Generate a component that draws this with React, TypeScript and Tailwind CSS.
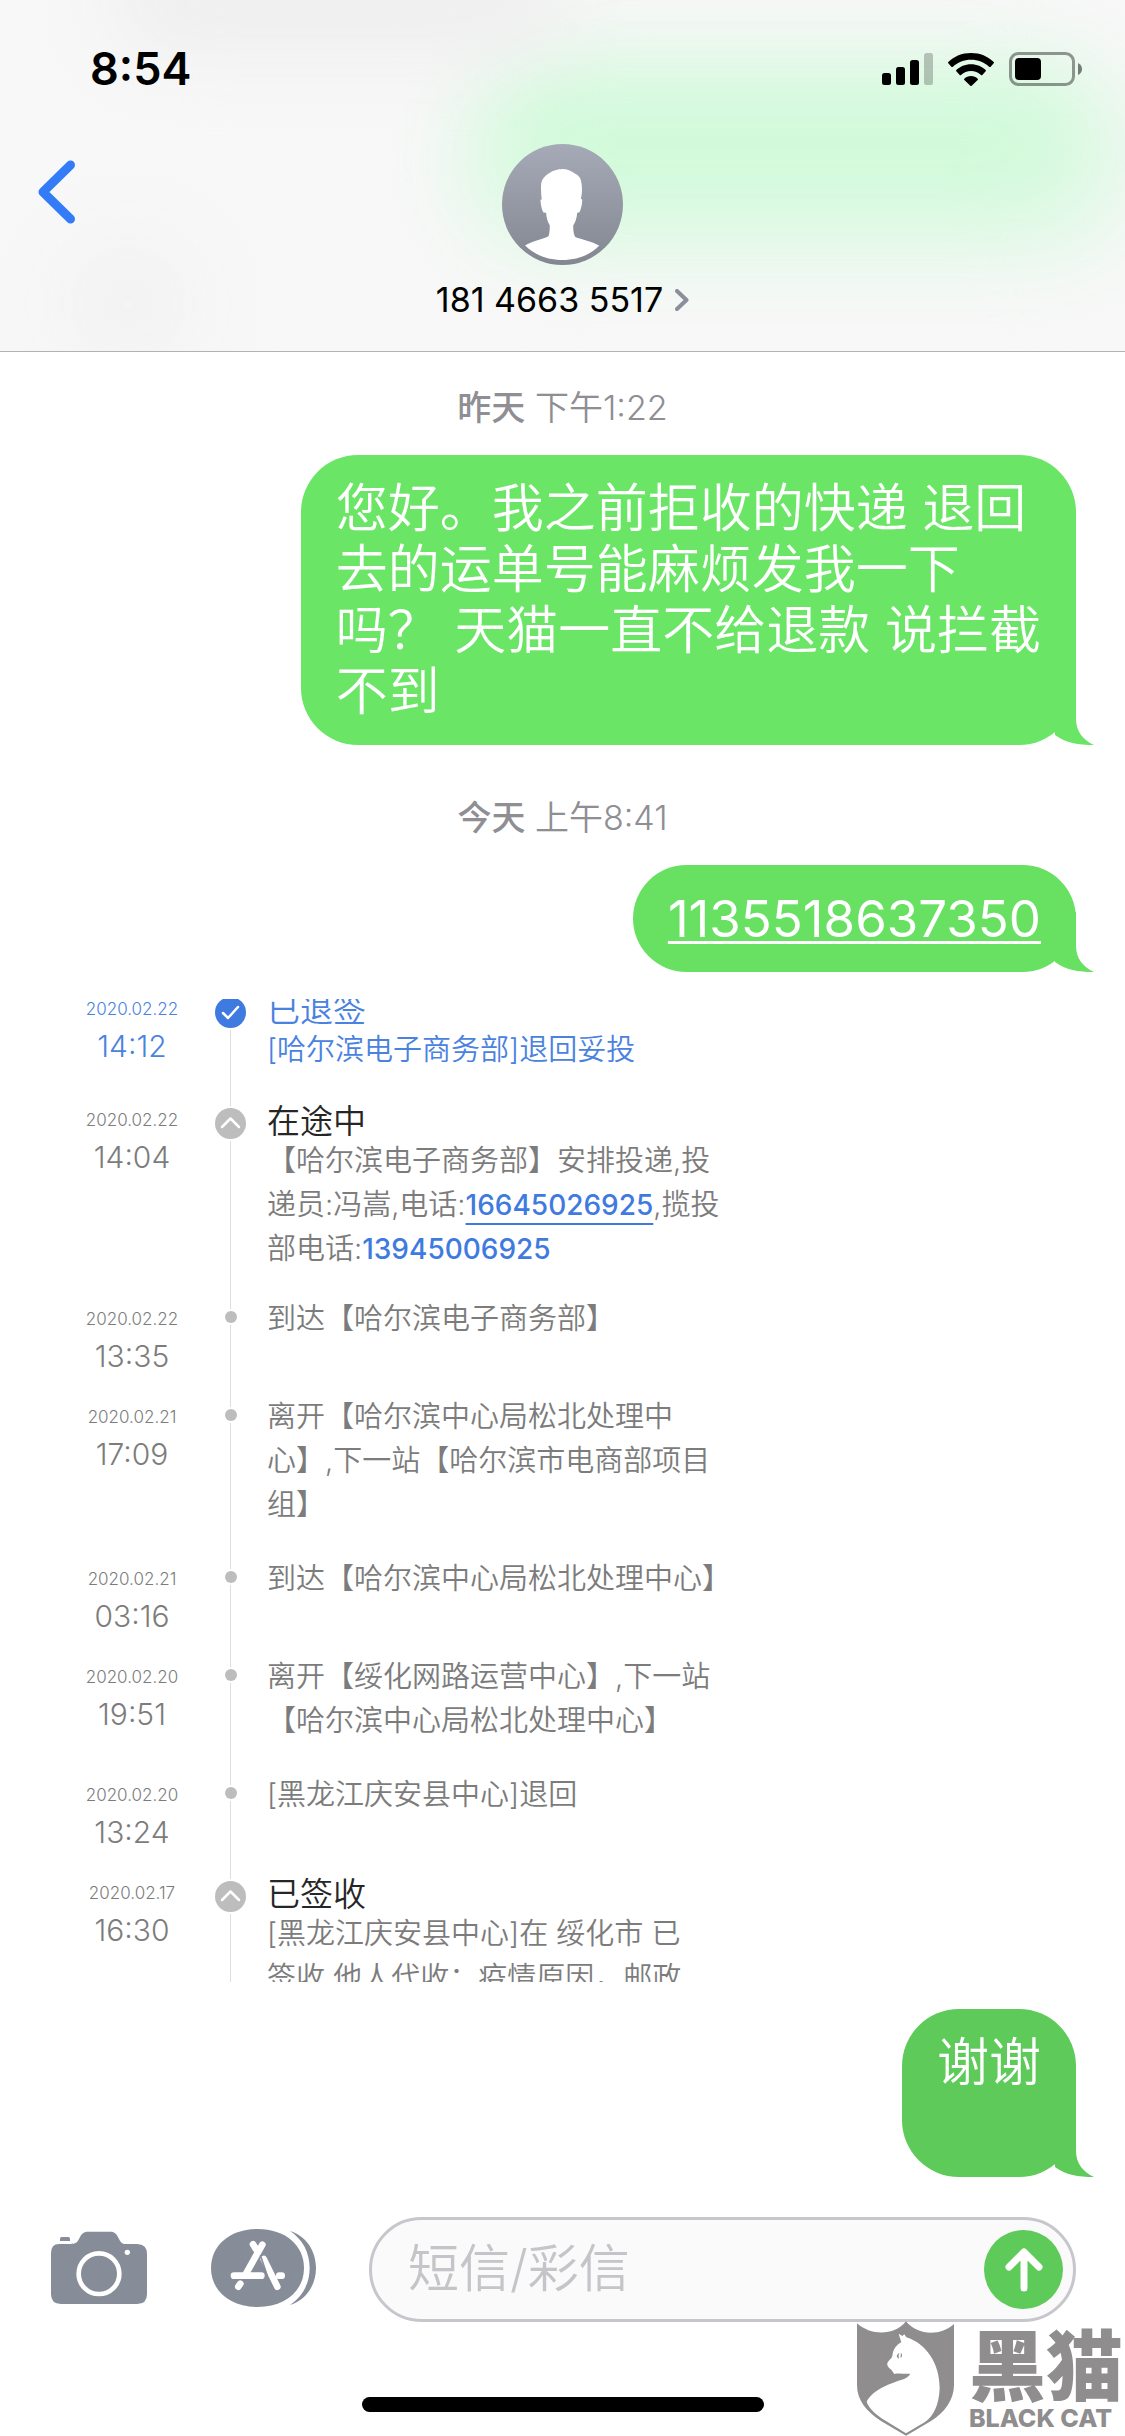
import type { ReactNode } from "react";

function SignalIcon() {
  return (
    <svg width="51" height="32" viewBox="0 0 51 32" aria-hidden="true">
      <rect x="0" y="20" width="9" height="12" rx="2.5" />
      <rect x="14" y="14" width="9" height="18" rx="2.5" />
      <rect x="28" y="7" width="9" height="25" rx="2.5" />
      <rect x="42" y="0" width="9" height="32" rx="2.5" opacity="0.22" />
    </svg>
  );
}

function WifiIcon() {
  return (
    <svg width="46" height="33" viewBox="0 0 138 99" aria-hidden="true">
      <path d="M69 0C42 0 18 10 1 27Q-1 29 1 31L10 41Q12 43 15 41C30 27 48 20 69 20S108 27 123 41Q126 43 128 41L137 31Q139 29 137 27C120 10 96 0 69 0Z" />
      <path d="M69 34C51 34 36 41 25 51Q23 53 25 55L35 66Q37 68 39 66C48 58 57 54 69 54S90 58 99 66Q101 68 103 66L113 55Q115 53 113 51C102 41 87 34 69 34Z" />
      <path d="M69 69C61 69 54 72 49 77Q47 79 49 81L67 98Q69 100 71 98L89 81Q91 79 89 77C84 72 77 69 69 69Z" />
    </svg>
  );
}

function BatteryIcon() {
  return (
    <svg width="73" height="34" viewBox="0 0 73 34" aria-hidden="true">
      <rect x="1.5" y="1.5" width="63" height="31" rx="8" fill="none" stroke="#000" strokeOpacity="0.4" strokeWidth="3" />
      <rect x="6" y="6" width="26" height="22" rx="4" />
      <path d="M69 11Q73 13 73 17T69 23Z" opacity="0.5" />
    </svg>
  );
}

function Avatar() {
  return (
    <svg width="121" height="121" viewBox="36 42 362 362" aria-hidden="true">
      <defs>
        <linearGradient id="avatar" x1="0" y1="0" x2="0" y2="1">
          <stop offset="0" stopColor="#a6aab7" />
          <stop offset="1" stopColor="#838791" />
        </linearGradient>
      </defs>
      <circle cx="217" cy="223" r="181" fill="url(#avatar)" />
      <path
        fill="#fff"
        d="M217 117C190 118 155 135 153 165C152 185 154 200 155 208L151 209C152 225 155 240 160 247L168 248C169 262 172 275 179 286C179 300 178 312 175 318C155 328 125 333 105 346C130 372 170 389 217 389C262 389 305 372 327 346C305 333 275 328 255 320C250 312 249 300 249 286C256 277 260 262 261 248L268 246C273 235 276 222 276 208L272 206C276 190 276 175 274 160C272 145 268 137 255 131C243 122 230 117 217 117Z"
      />
    </svg>
  );
}

function CameraIcon() {
  return (
    <svg width="98" height="76" viewBox="150 150 294 228" aria-hidden="true">
      <g fill="#868c98">
        <path d="M177 192H212C226 192 232 188 238 175C244 162 250 155 264 155H332C344 155 350 162 355 173C362 187 366 192 378 192H411Q441 192 441 222V343Q441 372 411 372H183Q153 372 153 343V220Q153 192 177 192Z" />
        <path d="M180 183V176Q180 171 185 171H205Q210 171 210 176V183Z" />
      </g>
      <circle cx="297" cy="281" r="61" fill="none" stroke="#fff" strokeWidth="14" />
      <circle cx="382" cy="217" r="8" fill="#fff" />
    </svg>
  );
}

function AppsIcon() {
  return (
    <svg width="107" height="80" viewBox="630 144 321 240" aria-hidden="true">
      <g fill="#868c98">
        <path d="M773 147C856 147 912 196 912 264S856 381 773 381S633 332 633 264S690 147 773 147Z" />
        <path d="M870 153C918 168 948 212 948 264S918 360 870 375C908 350 929 310 929 264S908 178 870 153Z" />
      </g>
      <g stroke="#fff" strokeWidth="20" strokeLinecap="round" fill="none">
        <path d="M759 193L768 208M787 194L738 281M702 287H784M838 287H845M791 237L832 320M721 311L715 320" />
      </g>
      <path d="M781 226L802 288" stroke="#868c98" strokeWidth="5" />
    </svg>
  );
}

function ShieldCat() {
  return (
    <svg width="99" height="116" viewBox="15 30 297 348" aria-hidden="true">
      <path
        fill="#8f8d8e"
        d="M18 40C60 78 130 78 165 34C200 78 270 78 309 42V225C309 270 280 308 240 333L165 377L90 333C45 303 18 270 18 225Z"
      />
      <path
        fill="#fff"
        d="M143 71L154 78L160 73L166 82C225 100 266 160 266 235C264 285 248 318 222 336L165 370L100 330C74 313 55 297 47 276C60 245 110 222 150 210C163 206 174 200 178 191C160 193 145 188 130 192L121 179C112 174 107 166 109 159C112 151 122 147 124 138C126 118 136 105 151 97Z"
      />
      <path fill="#8f8d8e" d="M137 138Q140 130 145 129Q141 137 144 146Q138 145 137 138ZM149 128Q155 132 153 139Q151 143 148 144Q151 136 149 128Z" />
    </svg>
  );
}

function Bubble({ tone, children }: { tone: string; children: ReactNode }) {
  return (
    <div className={`relative ml-auto w-fit rounded-[57px] bg-current px-[35px] py-[23px] ${tone}`}>
      <p className="text-[52px] leading-[61px] font-[350] whitespace-pre-line text-white">{children}</p>
      <svg className="absolute -right-[18px] bottom-0" width="40" height="60" viewBox="0 0 40 60" aria-hidden="true">
        <path fill="currentColor" d="M0 0H22V34C22 46 29 55 40 60C24 60 12 58 1 50Z" />
      </svg>
    </div>
  );
}

function Timestamp({ day, time }: { day: string; time: string }) {
  return (
    <p className="text-center text-[34px] leading-10 font-[350] text-[#8e8e93]">
      <span className="font-medium">{day}</span> {time}
    </p>
  );
}

type Step = { date: string; time: string; title?: string; body: ReactNode; done?: boolean };

const phone = "text-[28px] font-medium text-[#3f7ae0]";

const steps: Step[] = [
  { date: "2020.02.22", time: "14:12", title: "已退签", body: "[哈尔滨电子商务部]退回妥投", done: true },
  {
    date: "2020.02.22",
    time: "14:04",
    title: "在途中",
    body: (
      <>
        {"【哈尔滨电子商务部】安排投递,投\n递员:冯嵩,电话:"}
        <a href="tel:16645026925" className={`${phone} underline decoration-2 underline-offset-8`}>16645026925</a>
        {",揽投\n部电话:"}
        <a href="tel:13945006925" className={phone}>13945006925</a>
      </>
    ),
  },
  { date: "2020.02.22", time: "13:35", body: "到达【哈尔滨电子商务部】" },
  { date: "2020.02.21", time: "17:09", body: "离开【哈尔滨中心局松北处理中\n心】,下一站【哈尔滨市电商部项目\n组】" },
  { date: "2020.02.21", time: "03:16", body: "到达【哈尔滨中心局松北处理中心】" },
  { date: "2020.02.20", time: "19:51", body: "离开【绥化网路运营中心】,下一站\n【哈尔滨中心局松北处理中心】" },
  { date: "2020.02.20", time: "13:24", body: "[黑龙江庆安县中心]退回" },
  { date: "2020.02.17", time: "16:30", title: "已签收", body: "[黑龙江庆安县中心]在 绥化市 已\n签收,他人代收：疫情原因，邮政" },
];

function Marker({ step }: { step: Step }) {
  if (!step.title) {
    return (
      <>
        <span className="h-[13px] w-px bg-[#dedede]" />
        <span className="my-0.5 size-3 rounded-full bg-[#bdbdbd]" />
      </>
    );
  }
  return (
    <>
      <span className="h-[9px] w-px bg-[#dedede]" />
      <svg className="my-0.5" width="31" height="31" viewBox="0 0 31 31" fill="none" stroke="#fff" strokeWidth="2.5" strokeLinecap="round" strokeLinejoin="round" aria-hidden="true">
        <circle cx="15.5" cy="15.5" r="15.5" fill={step.done ? "#3f7ae0" : "#bdbdbd"} stroke="none" />
        <path d={step.done ? "M8 16L13 21L23 10" : "M7 19L15.5 10.5L24 19"} />
      </svg>
    </>
  );
}

function TimelineRow({ step }: { step: Step }) {
  return (
    <li className={`flex font-[350] ${step.done ? "text-[#4a82e0]" : "text-[#7c7c7c]"}`}>
      <div className="w-36 pb-6 text-center">
        <p className="text-[17px] leading-[46px]">{step.date}</p>
        <p className="text-[30px] leading-7">{step.time}</p>
      </div>
      <div className="flex w-[53px] flex-col items-center">
        <Marker step={step} />
        <span className="w-px flex-1 bg-[#dedede]" />
      </div>
      <div className={`pl-2.5 ${step.title ? "pt-1.5 pb-[25px]" : "pt-px pb-[29px]"}`}>
        {step.title && <h2 className={`text-[33px] leading-9 ${step.done ? "" : "text-[#262626]"}`}>{step.title}</h2>}
        <p className="text-[29px] leading-11 whitespace-pre">{step.body}</p>
      </div>
    </li>
  );
}

export default function App() {
  return (
    <div className="relative flex min-h-screen flex-col bg-white font-['Inter','Noto_Sans_CJK_SC',sans-serif]">
      <header className="relative overflow-hidden border-b border-[#b2b2b4] bg-[#f8f8f8] pb-[31px]">
        <div className="absolute top-14 -right-5 left-[40%] h-52 rounded-full bg-[#e6f9ea] blur-[40px]" />
        <div className="absolute top-20 right-10 left-[44%] h-32 rounded-full bg-[#d0fad9] blur-[40px]" />
        <div className="absolute -top-12 left-[10%] h-24 w-2/5 rounded-full bg-[#ededed] blur-2xl" />
        <div className="absolute top-60 left-16 size-32 rounded-full bg-[#f1f1f1] blur-2xl" />
        <div className="relative flex items-center justify-between pt-[42px] pr-[43px] pl-[90px]">
          <time className="text-[45px] leading-[54px] font-semibold">8:54</time>
          <div className="flex items-center gap-[15px]">
            <SignalIcon />
            <WifiIcon />
            <BatteryIcon />
          </div>
        </div>
        <nav className="relative mt-12 grid grid-cols-[1fr_auto_1fr] items-start">
          <button type="button" aria-label="返回" className="mt-4 w-fit pl-[38px]">
            <svg width="38" height="64" viewBox="0 0 38 64" fill="none" stroke="#347bf8" strokeWidth="9" strokeLinecap="round" strokeLinejoin="round">
              <path d="M32.5 5L5 32L32.5 59" />
            </svg>
          </button>
          <button type="button" className="flex flex-col items-center">
            <Avatar />
            <span className="mt-[15px] flex items-center gap-3 text-[34px] leading-10">
              181 4663 5517
              <svg width="14" height="22" viewBox="0 0 14 22" fill="none" stroke="#8b8f99" strokeWidth="4" strokeLinecap="round" strokeLinejoin="round" aria-hidden="true">
                <path d="M2 2L11.5 11L2 20" />
              </svg>
            </span>
          </button>
        </nav>
      </header>

      <main className="flex flex-col pt-9">
        <Timestamp day="昨天" time="下午1:22" />
        <div className="mt-[27px] pr-[49px]">
          <Bubble tone="text-[#6ae566]">
            {"您好。我之前拒收的快递 退回\n去的运单号能麻烦发我一下\n吗？ 天猫一直不给退款 说拦截\n不到"}
          </Bubble>
        </div>
        <div className="mt-[53px]">
          <Timestamp day="今天" time="上午8:41" />
        </div>
        <div className="mt-[27px] pr-[49px]">
          <Bubble tone="text-[#68e062]">
            <a href="tel:1135518637350" className="text-[51px] font-normal underline decoration-3 underline-offset-4">1135518637350</a>
          </Bubble>
        </div>
        <section aria-label="物流信息" className="mt-[27px] h-[983px] overflow-hidden pl-[60px]">
          <ol className="-mt-[13px]">
            {steps.map((step) => (
              <TimelineRow key={step.date + step.time} step={step} />
            ))}
          </ol>
        </section>
        <div className="mt-[27px] pr-[49px]">
          <Bubble tone="text-[#5dca59]">{"谢谢\n\u00a0"}</Bubble>
        </div>
      </main>

      <footer className="mt-auto flex flex-col pt-10 pb-6">
        <div className="flex items-center pr-[49px] pl-[50px]">
          <button type="button" aria-label="相机" className="shrink-0 pb-1"><CameraIcon /></button>
          <button type="button" aria-label="应用" className="ml-[62px] shrink-0 pb-1"><AppsIcon /></button>
          <div className="ml-[52px] flex h-[105px] min-w-0 flex-1 items-center rounded-full border-3 border-[#c7c6cc] bg-[#fafafa] pr-2.5 pl-9">
            <input
              type="text"
              aria-label="短信/彩信"
              placeholder="短信/彩信"
              className="min-w-0 flex-1 text-[51px] font-[350] outline-none placeholder:text-[#c5c5c9]"
            />
            <button type="button" aria-label="发送" className="flex size-[79px] shrink-0 items-center justify-center rounded-full bg-[#5dca59]">
              <svg width="38" height="44" viewBox="0 0 38 44" fill="none" stroke="#fff" strokeWidth="7" strokeLinecap="round" strokeLinejoin="round">
                <path d="M19 40V5M4 19L19 4L34 19" />
              </svg>
            </button>
          </div>
        </div>
        <div className="mx-auto mt-[75px] h-[15px] w-[402px] rounded-full bg-black" />
      </footer>

      <div className="absolute right-0.5 bottom-0 flex items-start gap-3.5 text-[#8f8d8e]">
        <ShieldCat />
        <div className="font-['Noto_Sans_CJK_SC',sans-serif]">
          <p className="text-[77px] leading-[84px] font-black">黑猫</p>
          <p className="font-['Inter',sans-serif] text-[25px] leading-7 font-extrabold">BLACK CAT</p>
        </div>
      </div>
    </div>
  );
}
